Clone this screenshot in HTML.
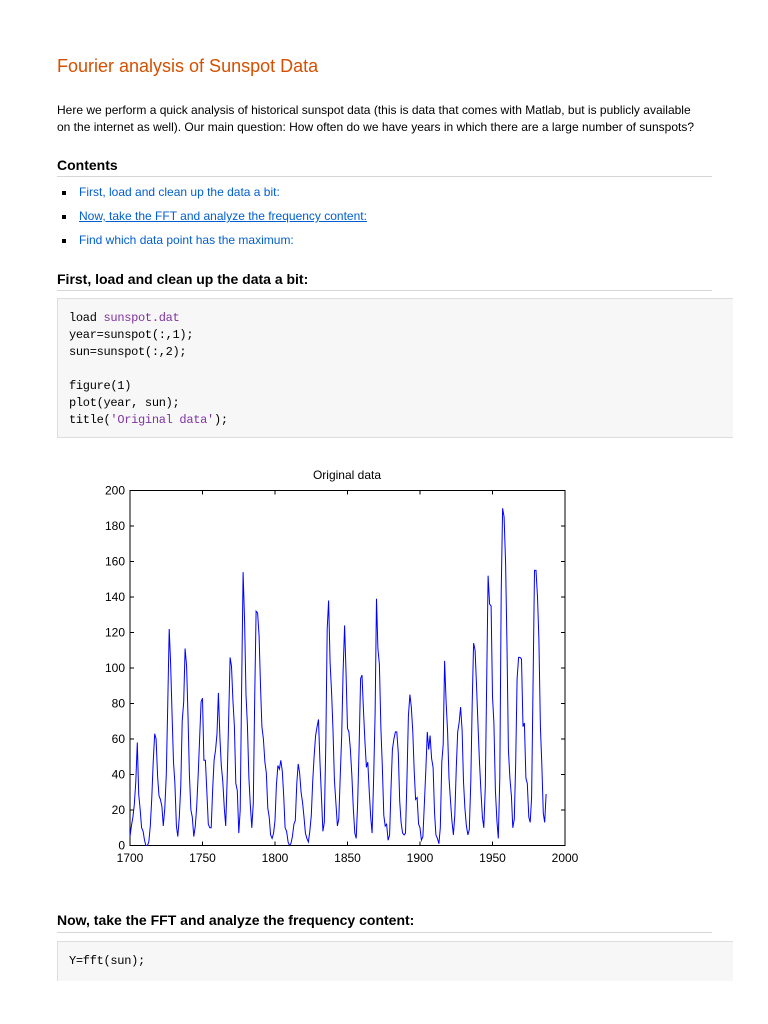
<!DOCTYPE html>
<html><head><meta charset="utf-8">
<style>
body{margin:0;background:#fff;width:768px;height:1024px;overflow:hidden;position:relative;font-family:"Liberation Sans",Arial,sans-serif;}
.a{position:absolute;white-space:nowrap;}
h1{position:absolute;left:57px;top:56px;margin:0;font-size:18px;font-weight:normal;color:#d55000;}
p{position:absolute;left:57px;top:102px;margin:0;font-size:12px;line-height:17px;color:#000;}
.h{position:absolute;left:57px;margin:0;font-size:14px;font-weight:bold;color:#000;}
.hr{position:absolute;left:57px;width:655px;height:1px;background:#d6d6d6;}
.li{position:absolute;left:65px;font-size:12px;color:#005fce;}
.li:before{content:"";position:absolute;left:-3px;top:6px;width:4px;height:4px;background:#000;}
.li span{margin-left:14px;}
.code{position:absolute;left:57px;width:676px;background:#f7f7f7;border:1px solid #ddd;border-right:none;box-sizing:border-box;}
pre{margin:0;position:absolute;left:11px;font-family:"Liberation Mono",monospace;font-size:12px;line-height:17px;color:#000;letter-spacing:-0.3px;}
.s{color:#8034a0;}
</style></head><body>
<h1>Fourier analysis of Sunspot Data</h1>
<p>Here we perform a quick analysis of historical sunspot data (this is data that comes with Matlab, but is publicly available<br>on the internet as well). Our main question: How often do we have years in which there are a large number of sunspots?</p>
<div class="h" style="top:157px">Contents</div>
<div class="hr" style="top:176px"></div>
<div class="li" style="top:185px"><span>First, load and clean up the data a bit:</span></div>
<div class="li" style="top:209px"><span style="text-decoration:underline">Now, take the FFT and analyze the frequency content:</span></div>
<div class="li" style="top:233px"><span>Find which data point has the maximum:</span></div>
<div class="h" style="top:271px">First, load and clean up the data a bit:</div>
<div class="hr" style="top:290px"></div>
<div class="code" style="top:298px;height:140px"><pre style="top:11px">load <span class="s">sunspot.dat</span>
year=sunspot(:,1);
sun=sunspot(:,2);

figure(1)
plot(year, sun);
title(<span class="s">'Original data'</span>);</pre></div>
<svg class="a" style="left:0;top:450px" width="768" height="420" viewBox="0 450 768 420">
<text x="347" y="479" font-size="12" text-anchor="middle" font-family="Liberation Sans,sans-serif">Original data</text>
<rect x="130" y="490.5" width="435" height="355" fill="none" stroke="#000" stroke-width="1"/>
<g id="ticks" stroke="#000" stroke-width="1"></g>
<g id="labels" font-size="12" font-family="Liberation Sans,sans-serif" fill="#000"></g>
<polyline id="pl" fill="none" stroke="#0000ff" stroke-width="1" points=""/>
</svg>
<div class="h" style="top:912px">Now, take the FFT and analyze the frequency content:</div>
<div class="hr" style="top:932px"></div>
<div class="code" style="top:941px;height:40px;border-bottom:none"><pre style="top:11px">Y=fft(sun);</pre></div>
<script>
var d=[5,11,16,23,36,58,29,20,10,8,3,0,0,2,11,27,47,63,60,39,28,26,22,11,21,40,78,122,103,73,47,35,11,5,16,34,70,81,111,101,73,40,20,16,5,11,22,40,60,81,83,48,48,31,12,10,10,32,48,54,63,86,61,45,36,21,11,38,70,106,101,82,67,35,31,7,20,92,154,126,85,68,38,23,10,24,83,132,131,118,90,67,60,47,41,21,16,6,4,7,14,34,45,43,48,42,28,10,8,2,0,1,5,12,14,35,46,41,30,24,16,7,4,2,8,17,36,50,62,67,71,48,28,8,13,57,122,138,103,86,65,37,24,11,15,40,62,98,124,96,66,64,54,39,21,7,4,23,55,94,96,77,59,44,47,30,16,7,37,74,139,111,102,66,45,17,11,12,3,6,32,54,60,64,64,52,25,13,7,6,7,36,73,85,78,64,42,26,27,12,10,3,5,24,42,64,54,62,49,44,19,6,4,1,10,47,57,104,81,64,38,26,14,6,17,44,64,69,78,65,36,21,11,6,9,36,80,114,110,89,68,48,31,16,10,33,93,152,136,135,84,69,31,14,4,38,142,190,185,159,112,54,38,28,10,15,47,94,106,106,105,67,69,38,35,16,13,27,93,155,155,140,116,67,46,18,13,29];
var X=function(y){return 130+(y-1700)*435/300},Y=function(v){return 845.5-v*355/200};
var p=[];for(var i=0;i<d.length;i++)p.push(X(1700+i).toFixed(1)+","+Y(d[i]).toFixed(1));
document.getElementById("pl").setAttribute("points",p.join(" "));
var ns="http://www.w3.org/2000/svg",t=document.getElementById("ticks"),l=document.getElementById("labels");
function ln(a,b,c,e){var q=document.createElementNS(ns,"line");q.setAttribute("x1",a);q.setAttribute("y1",b);q.setAttribute("x2",c);q.setAttribute("y2",e);t.appendChild(q);}
function tx(s,x,y,an){var q=document.createElementNS(ns,"text");q.setAttribute("x",x);q.setAttribute("y",y);q.setAttribute("text-anchor",an);q.textContent=s;l.appendChild(q);}
for(var v=0;v<=200;v+=20){var y=Y(v);ln(130,y,134,y);ln(565,y,561,y);tx(v,125,y+4,"end");}
for(var yr=1700;yr<=2000;yr+=50){var x=X(yr);ln(x,845.5,x,841.5);ln(x,490.5,x,494.5);tx(yr,x,862,"middle");}
</script>
</body></html>
